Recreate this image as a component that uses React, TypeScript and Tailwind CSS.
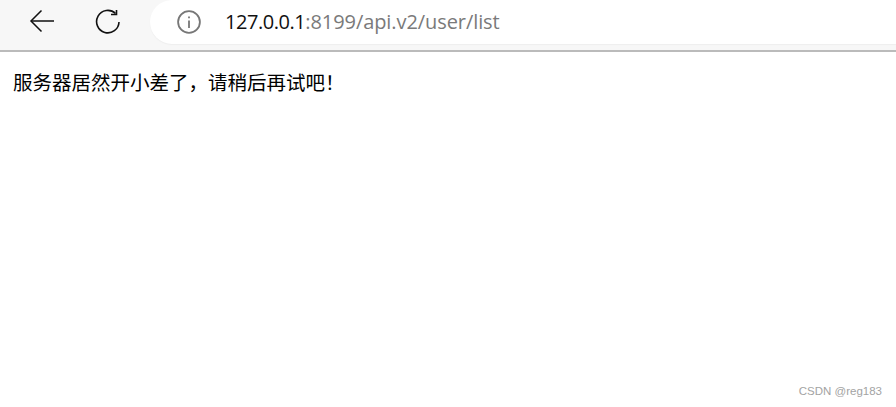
export default function App() {
  return (
    <div className="relative flex h-[407px] w-[896px] flex-col overflow-hidden bg-white">
      <header className="flex h-[52px] shrink-0 border-b-2 border-[#bbbbbb] bg-[#f7f7f7]">
        <div className="flex w-[150px] shrink-0 items-start">
          <svg className="ml-[29px] mt-[9px] h-[24px] w-[26px]" viewBox="0 0 26 24" fill="none" stroke="#111111" strokeWidth="1.5">
            <path d="M25 12H2" />
            <path d="M12.5 1.5L2 12L12.5 22.5" />
          </svg>
          <svg className="ml-[40px] mt-[9px] h-[26px] w-[26px]" viewBox="0 0 26 26" fill="none" stroke="#111111" strokeWidth="1.6">
            <path d="M20.5 4.5A11.2 11.2 0 1 0 24 13" />
            <path d="M21.5 1V5.5H16" />
          </svg>
        </div>
        <div className="flex h-[44px] flex-1 items-center rounded-l-[22px] bg-white shadow-[0_1px_1px_#eeeeee]">
          <svg className="ml-[27px] h-[24px] w-[24px]" viewBox="0 0 24 24" fill="none" stroke="#777777" strokeWidth="1.8">
            <circle cx="12" cy="12" r="10.9" />
            <path d="M12 10.5V18" />
            <path d="M12 6.5V8.3" />
          </svg>
          <div className="ml-[24px] font-['Open_Sans','Liberation_Sans',sans-serif] text-[20px] leading-[44px] text-[#7a7a7a]">
            <span className="tracking-[-0.45px] text-[#111111]">127.0.0.1</span>
            <span className="tracking-[-0.08px]">:8199/api.v2/user/list</span>
          </div>
        </div>
      </header>
      <p className="ml-[13px] mt-[18px] font-['Noto_Sans_CJK_SC',serif] text-[19.5px] leading-[24px] text-black">
        服务器居然开小差了，请稍后再试吧！
      </p>
      <div className="absolute bottom-[9px] right-[14px] font-['Liberation_Sans',sans-serif] text-[11.5px] leading-[14px] text-[#a3a3a3]">
        CSDN @reg183
      </div>
    </div>
  )
}
